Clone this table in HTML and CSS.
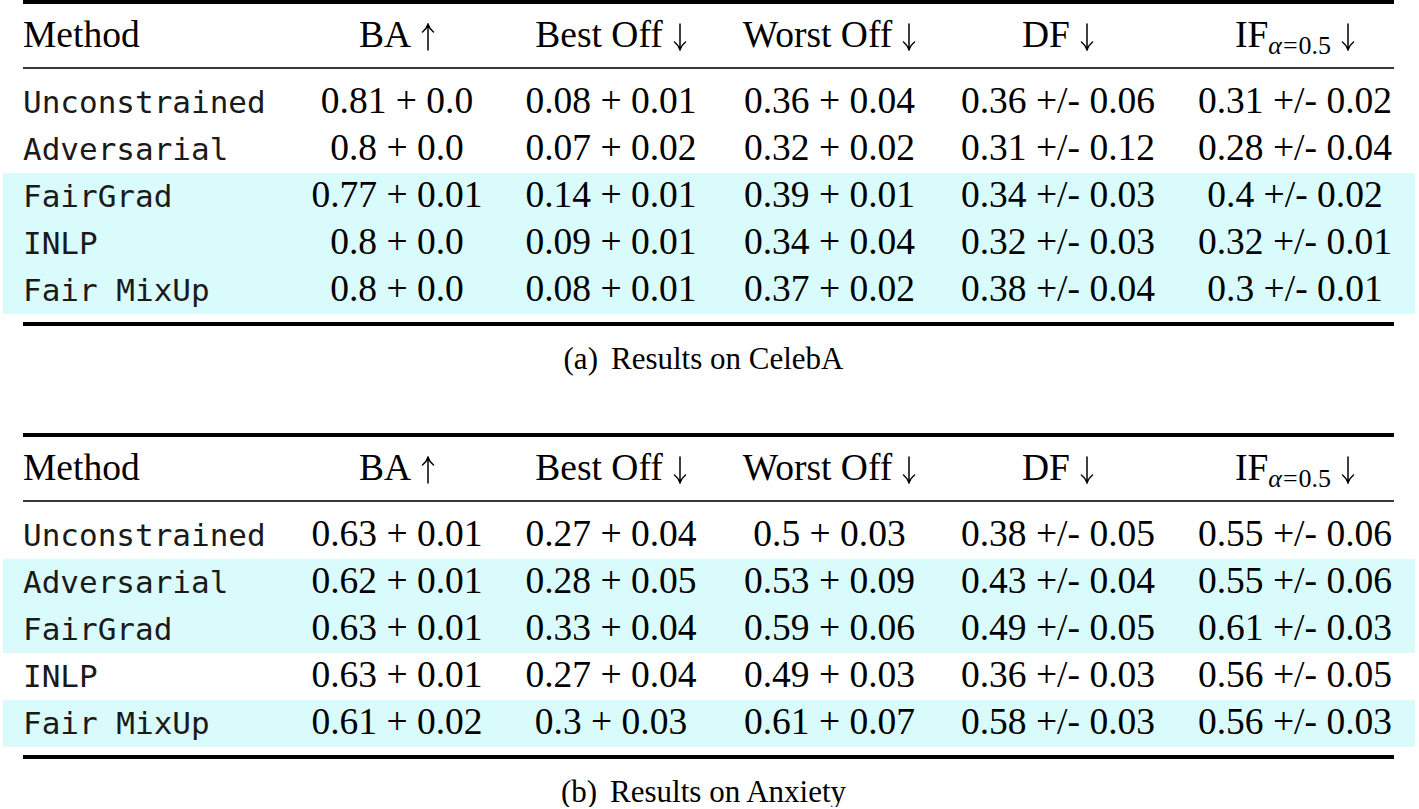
FILE: index.html
```html
<!DOCTYPE html>
<html lang="en">
<head>
<meta charset="utf-8">
<title>Results</title>
<link rel="stylesheet" href="styles.css">
</head>
<body>
<div class="figure">
  <section class="table">
    <div class="rule thick"></div>
    <div class="row head">
      <div class="cell">Method</div>
      <div class="cell">BA<svg class="arrow" viewBox="0 0 14 28" aria-label="↑"><path d="M7 27V2M1.5 9C4 7 6 4.5 7 1.2C8 4.5 10 7 12.5 9"/></svg></div>
      <div class="cell">Best Off<svg class="arrow" viewBox="0 0 14 28" aria-label="↓"><path d="M7 1V26M1.5 19C4 21 6 23.5 7 26.8C8 23.5 10 21 12.5 19"/></svg></div>
      <div class="cell">Worst Off<svg class="arrow" viewBox="0 0 14 28" aria-label="↓"><path d="M7 1V26M1.5 19C4 21 6 23.5 7 26.8C8 23.5 10 21 12.5 19"/></svg></div>
      <div class="cell">DF<svg class="arrow" viewBox="0 0 14 28" aria-label="↓"><path d="M7 1V26M1.5 19C4 21 6 23.5 7 26.8C8 23.5 10 21 12.5 19"/></svg></div>
      <div class="cell">IF<sub class="sub"><i>α</i><span class="eq">=</span>0.5</sub><svg class="arrow" viewBox="0 0 14 28" aria-label="↓"><path d="M7 1V26M1.5 19C4 21 6 23.5 7 26.8C8 23.5 10 21 12.5 19"/></svg></div>
    </div>
    <div class="rule thin"></div>
    <div class="row data"><div class="cell mono">Unconstrained</div><div class="cell">0.81 + 0.0</div><div class="cell">0.08 + 0.01</div><div class="cell">0.36 + 0.04</div><div class="cell">0.36 +/- 0.06</div><div class="cell">0.31 +/- 0.02</div></div>
    <div class="row data"><div class="cell mono">Adversarial</div><div class="cell">0.8 + 0.0</div><div class="cell">0.07 + 0.02</div><div class="cell">0.32 + 0.02</div><div class="cell">0.31 +/- 0.12</div><div class="cell">0.28 +/- 0.04</div></div>
    <div class="row data hl"><div class="cell mono">FairGrad</div><div class="cell">0.77 + 0.01</div><div class="cell">0.14 + 0.01</div><div class="cell">0.39 + 0.01</div><div class="cell">0.34 +/- 0.03</div><div class="cell">0.4 +/- 0.02</div></div>
    <div class="row data hl"><div class="cell mono">INLP</div><div class="cell">0.8 + 0.0</div><div class="cell">0.09 + 0.01</div><div class="cell">0.34 + 0.04</div><div class="cell">0.32 +/- 0.03</div><div class="cell">0.32 +/- 0.01</div></div>
    <div class="row data hl"><div class="cell mono">Fair MixUp</div><div class="cell">0.8 + 0.0</div><div class="cell">0.08 + 0.01</div><div class="cell">0.37 + 0.02</div><div class="cell">0.38 +/- 0.04</div><div class="cell">0.3 +/- 0.01</div></div>
    <div class="rule thick bottom"></div>
  </section>
  <p class="caption"><span class="label">(a)</span>Results on CelebA</p>

  <section class="table">
    <div class="rule thick"></div>
    <div class="row head">
      <div class="cell">Method</div>
      <div class="cell">BA<svg class="arrow" viewBox="0 0 14 28" aria-label="↑"><path d="M7 27V2M1.5 9C4 7 6 4.5 7 1.2C8 4.5 10 7 12.5 9"/></svg></div>
      <div class="cell">Best Off<svg class="arrow" viewBox="0 0 14 28" aria-label="↓"><path d="M7 1V26M1.5 19C4 21 6 23.5 7 26.8C8 23.5 10 21 12.5 19"/></svg></div>
      <div class="cell">Worst Off<svg class="arrow" viewBox="0 0 14 28" aria-label="↓"><path d="M7 1V26M1.5 19C4 21 6 23.5 7 26.8C8 23.5 10 21 12.5 19"/></svg></div>
      <div class="cell">DF<svg class="arrow" viewBox="0 0 14 28" aria-label="↓"><path d="M7 1V26M1.5 19C4 21 6 23.5 7 26.8C8 23.5 10 21 12.5 19"/></svg></div>
      <div class="cell">IF<sub class="sub"><i>α</i><span class="eq">=</span>0.5</sub><svg class="arrow" viewBox="0 0 14 28" aria-label="↓"><path d="M7 1V26M1.5 19C4 21 6 23.5 7 26.8C8 23.5 10 21 12.5 19"/></svg></div>
    </div>
    <div class="rule thin"></div>
    <div class="row data"><div class="cell mono">Unconstrained</div><div class="cell">0.63 + 0.01</div><div class="cell">0.27 + 0.04</div><div class="cell">0.5 + 0.03</div><div class="cell">0.38 +/- 0.05</div><div class="cell">0.55 +/- 0.06</div></div>
    <div class="row data hl"><div class="cell mono">Adversarial</div><div class="cell">0.62 + 0.01</div><div class="cell">0.28 + 0.05</div><div class="cell">0.53 + 0.09</div><div class="cell">0.43 +/- 0.04</div><div class="cell">0.55 +/- 0.06</div></div>
    <div class="row data hl"><div class="cell mono">FairGrad</div><div class="cell">0.63 + 0.01</div><div class="cell">0.33 + 0.04</div><div class="cell">0.59 + 0.06</div><div class="cell">0.49 +/- 0.05</div><div class="cell">0.61 +/- 0.03</div></div>
    <div class="row data"><div class="cell mono">INLP</div><div class="cell">0.63 + 0.01</div><div class="cell">0.27 + 0.04</div><div class="cell">0.49 + 0.03</div><div class="cell">0.36 +/- 0.03</div><div class="cell">0.56 +/- 0.05</div></div>
    <div class="row data hl"><div class="cell mono">Fair MixUp</div><div class="cell">0.61 + 0.02</div><div class="cell">0.3 + 0.03</div><div class="cell">0.61 + 0.07</div><div class="cell">0.58 +/- 0.03</div><div class="cell">0.56 +/- 0.03</div></div>
    <div class="rule thick bottom"></div>
  </section>
  <p class="caption"><span class="label">(b)</span>Results on Anxiety</p>
</div>
</body>
</html>
```

FILE: styles.css
```css
html, body {
  margin: 0;
  padding: 0;
  background: #ffffff;
}

body {
  color: #000000;
  font-family: "Liberation Serif", "Times New Roman", serif;
}

.figure {
  width: 1412px;
  padding-left: 3px;
}

.table {
  display: block;
}

.rule {
  margin: 0 21px 0 20px;
  background: #000000;
}

.rule.thick {
  height: 4px;
}

.rule.thin {
  height: 2px;
  background: #3a3a3a;
  margin-bottom: 10px;
}

.rule.bottom {
  margin-top: 8px;
}

.row {
  display: grid;
  grid-template-columns: 267px 214px 214px 223px 234px 219px;
  align-items: baseline;
  padding: 0 21px 0 20px;
  box-sizing: border-box;
  font-size: 37.5px;
  line-height: 37px;
}

.head {
  height: 63px;
  padding-top: 12px;
}

.data {
  height: 47px;
  padding-top: 3px;
}

.hl {
  background: #d9fbfc;
}

.cell {
  text-align: center;
  white-space: pre;
}

.cell:first-child {
  text-align: left;
}

.cell:last-child {
  padding-left: 21px;
}

.mono {
  font-family: "DejaVu Sans Mono", monospace;
  font-size: 31px;
  color: #1a1a1a;
}

.arrow {
  width: 14px;
  height: 28px;
  margin-left: 10px;
  vertical-align: -4px;
  fill: none;
  stroke: #000000;
  stroke-width: 1.5;
  stroke-linecap: round;
}

.sub {
  font-size: 26px;
  line-height: 0;
  vertical-align: -7px;
}

.sub i {
  font-style: italic;
}

.sub .eq {
  margin: 0 1px;
}

.caption {
  margin: 18px 0 59px;
  padding: 0 31px 0 20px;
  font-size: 31px;
  line-height: 30px;
  text-align: center;
}

.caption:last-child {
  margin-bottom: 0;
}

.caption .label {
  margin-right: 13px;
}
```
